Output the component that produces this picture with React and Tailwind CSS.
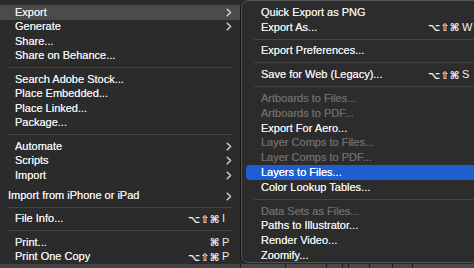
const leftGroups = [
  [
    { label: 'Export', arrow: true, active: true },
    { label: 'Generate', arrow: true },
    { label: 'Share...' },
    { label: 'Share on Behance...' },
  ],
  [
    { label: 'Search Adobe Stock...' },
    { label: 'Place Embedded...' },
    { label: 'Place Linked...' },
    { label: 'Package...' },
  ],
  [
    { label: 'Automate', arrow: true },
    { label: 'Scripts', arrow: true },
    { label: 'Import', arrow: true },
    { label: 'Import from iPhone or iPad', arrow: true, outdent: true },
  ],
  [{ label: 'File Info...', mods: '⌥⇧⌘', keyName: 'I' }],
  [
    { label: 'Print...', mods: '⌘', keyName: 'P' },
    { label: 'Print One Copy', mods: '⌥⇧⌘', keyName: 'P' },
  ],
];

const rightGroups = [
  [
    { label: 'Quick Export as PNG' },
    { label: 'Export As...', mods: '⌥⇧⌘', keyName: 'W' },
  ],
  [{ label: 'Export Preferences...' }],
  [{ label: 'Save for Web (Legacy)...', mods: '⌥⇧⌘', keyName: 'S' }],
  [
    { label: 'Artboards to Files...', disabled: true },
    { label: 'Artboards to PDF...', disabled: true },
    { label: 'Export For Aero...' },
    { label: 'Layer Comps to Files...', disabled: true },
    { label: 'Layer Comps to PDF...', disabled: true },
    { label: 'Layers to Files...', selected: true },
    { label: 'Color Lookup Tables...' },
  ],
  [
    { label: 'Data Sets as Files...', disabled: true },
    { label: 'Paths to Illustrator...' },
    { label: 'Render Video...' },
    { label: 'Zoomify...' },
  ],
];

function Chevron() {
  return (
    <svg width="6" height="9" viewBox="0 0 6 9" className="shrink-0">
      <path d="M1.2 1.2 L4.6 4.5 L1.2 7.8" fill="none" stroke="#d6d6d6" strokeWidth="1.4" strokeLinecap="round" strokeLinejoin="round" />
    </svg>
  );
}

function Shortcut({ mods, keyName }) {
  return (
    <div className="flex items-center">
      <span className="font-['DejaVu_Sans',sans-serif] text-[10.5px] font-bold tracking-[0.5px]">{mods}</span>
      <span className="w-[12px] pl-[2px] text-left">{keyName}</span>
    </div>
  );
}

function Row({ item, height, side }) {
  let cls = 'text-[#ececec]';
  if (item.disabled) cls = 'text-[#6a6a6a]';
  let bg = '';
  if (item.active) bg = 'bg-[#4b4b4b]';
  if (item.selected) bg = 'bg-[#1d5fd0] rounded-l-[4px] ml-[4px] text-white';
  const pad = side === 'left' ? (item.outdent ? 'pl-[8px] pr-[9px]' : 'pl-[15px] pr-[9px]') : (item.selected ? 'pl-[15px] pr-[2px]' : 'pl-[19px] pr-[2px]');
  return (
    <div
      className={`flex items-center ${item.outdent ? 'items-end pb-[2px]' : ''} ${pad} ${bg} ${cls}`}
      style={{ height }}
    >
      <span className="whitespace-nowrap [text-shadow:0_0_0.4px_currentColor]">{item.label}</span>
      <div className="ml-auto flex items-center">
        {item.mods && <Shortcut mods={item.mods} keyName={item.keyName} />}
        {item.arrow && <Chevron />}
      </div>
    </div>
  );
}

function Separator({ left }) {
  return (
    <div className={`flex h-[9px] items-center ${left ? 'pl-[8px] pr-[8px]' : 'pl-[12px]'}`}>
      <div className="h-px w-full bg-[#424242]" />
    </div>
  );
}

function Menu({ groups, side, rowH }) {
  return groups.map((g, gi) => (
    <div key={gi}>
      {gi > 0 && <Separator left={side === 'left'} />}
      {g.map((item) => (
        <Row key={item.label} item={item} side={side} height={item.outdent ? 20 : rowH} />
      ))}
    </div>
  ));
}

export default function App() {
  const segs = [44, 40, 15, 5, 21, 22, 19, 61];
  return (
    <div className="flex h-[268px] w-[474px] flex-col overflow-hidden bg-[#3c3c3c] font-['Liberation_Sans',Arial,sans-serif] text-[11px] leading-none">
      <div className="flex h-[264px] items-start bg-[#2a2a2a]">
        <div className="h-[264px] w-[241px] shrink-0 bg-[#2b2b2b] pt-[5px]">
          <Menu groups={leftGroups} side="left" rowH={14.5} />
        </div>
        <div className="h-[263px] flex-1 rounded-l-[7px] border border-r-0 border-[#525252] bg-[#2c2c2c] pt-[4px] shadow-[-1px_0_0_#111]">
          <Menu groups={rightGroups} side="right" rowH={14.8} />
        </div>
      </div>
      <div className="flex h-[4px] gap-px bg-[#1e1e1e]">
        <div className="w-[241px] bg-[#454545]" />
        {segs.map((w, i) => (
          <div key={i} className="bg-[#4a4a4a]" style={{ width: w }} />
        ))}
      </div>
    </div>
  );
}
